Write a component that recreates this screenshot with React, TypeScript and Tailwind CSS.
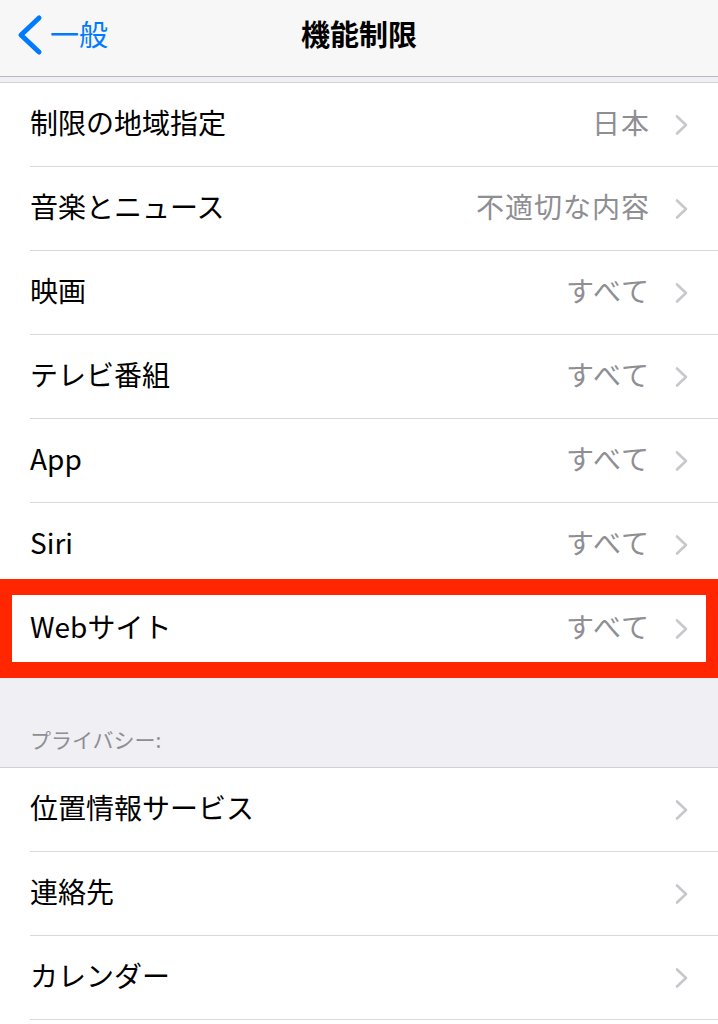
import React from "react";

const font = { fontFamily: '"Noto Sans CJK JP", "Noto Sans", sans-serif' };

function Chevron() {
  return (
    <svg width="16" height="22" viewBox="0 0 16 22" className="shrink-0">
      <path d="M3 2.5 L12 11 L3 19.5" fill="none" stroke="#c7c7cc" strokeWidth="2.6" strokeLinecap="round" strokeLinejoin="round" />
    </svg>
  );
}

function Row({ label, value, last }: { label: string; value?: string; last?: boolean }) {
  return (
    <div className="h-[84px] pl-[30px] bg-white flex">
      <div className={`flex-1 flex items-center pr-[28px] ${last ? "" : "border-b border-[#d9d9dd]"}`}>
        <span className="text-[28px] text-black leading-none mb-[6px]">{label}</span>
        <span className="ml-auto text-[28px] text-[#8e8e93] leading-none mr-[24px] mb-[6px] tracking-[1px]">{value ?? ""}</span>
        <Chevron />
      </div>
    </div>
  );
}

export default function App() {
  const s1: [string, string][] = [
    ["制限の地域指定", "日本"],
    ["音楽とニュース", "不適切な内容"],
    ["映画", "すべて"],
    ["テレビ番組", "すべて"],
    ["App", "すべて"],
    ["Siri", "すべて"],
    ["Webサイト", "すべて"],
  ];
  const s2 = ["位置情報サービス", "連絡先", "カレンダー", ""];
  return (
    <div className="w-[718px] h-[1024px] bg-[#efeff4] overflow-hidden relative" style={font}>
      <div className="h-[77px] bg-[#f7f7f8] border-b border-[#b9b9bd] relative flex items-center pb-[6px]">
        <div className="flex items-center pl-[16px] text-[#007aff]">
          <svg width="28" height="42" viewBox="0 0 28 42">
            <path d="M23 4 L5 21 L23 38" fill="none" stroke="#007aff" strokeWidth="5" strokeLinecap="round" strokeLinejoin="round" />
          </svg>
          <span className="text-[29px] leading-none ml-[6px] mb-[4px]">一般</span>
        </div>
        <div className="absolute left-0 right-0 top-0 bottom-[10px] flex items-center justify-center pointer-events-none">
          <span className="text-[29px] font-bold leading-none text-black">機能制限</span>
        </div>
      </div>
      <div className="h-[5px]" />
      <div className="border-t border-[#d0d0d4] bg-white">
        {s1.map(([l, v], i) => (
          <Row key={l} label={l} value={v} last={i === s1.length - 1} />
        ))}
      </div>
      <div className="h-[96px] flex items-end pl-[30px] pb-[17px]">
        <span className="text-[21px] text-[#8e8e93] leading-none">プライバシー:</span>
      </div>
      <div className="border-t border-[#d0d0d4] bg-white">
        {s2.map((l, i) => (
          <Row key={i} label={l} />
        ))}
      </div>
      <div className="absolute left-0 right-0 top-[579px] h-[99px] border-x-[12px] border-y-[16px] border-[#ff2600]" />
    </div>
  );
}
